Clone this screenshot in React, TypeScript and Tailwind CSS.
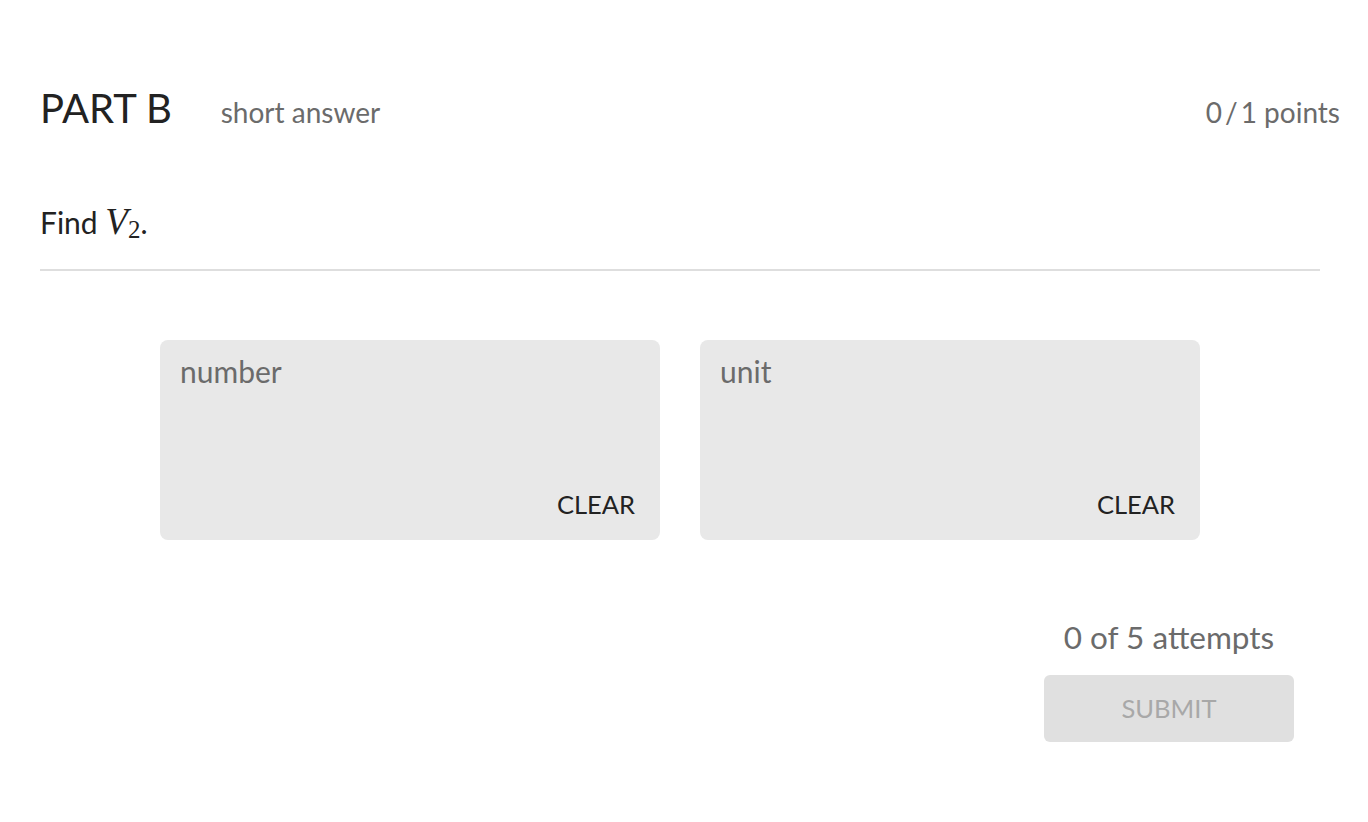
const ClearBox = ({ label }: { label: string }) => (
  <div className="w-[500px] h-[200px] rounded-lg bg-[#e8e8e8] flex flex-col justify-between pl-5 pr-[25px] pt-[11px] pb-[21px]">
    <span className="text-[30px] leading-[40px] text-[#6b6b6b]">{label}</span>
    <button className="self-end text-[25.5px] leading-[30px] text-[#222]">CLEAR</button>
  </div>
);

const App = () => {
  return (
    <div className="min-h-[822px] bg-white font-['Lato','Liberation_Sans',sans-serif]">
      <div className="flex items-baseline pl-10 pr-[28px] pt-[82px]">
        <h2 className="text-[40px] leading-[52px] text-[#222]">PART B</h2>
        <span className="ml-[49px] text-[28px] text-[#6b6b6b]">short answer</span>
        <span className="ml-auto text-[28px] text-[#6b6b6b]">
          0<span className="mx-[3px]">/</span>1 points
        </span>
      </div>

      <div className="ml-10 mr-12 mt-[68px] pb-[19px] border-b-2 border-[#dedede]">
        <p className="text-[30px] leading-[40px] text-[#222]">
          Find{' '}
          <span className="font-['Liberation_Serif',serif] italic text-[37px]">V</span>
          <span className="font-['Liberation_Serif',serif] text-[25px] align-[-4px]">2</span>.
        </p>
      </div>

      <div className="flex justify-center gap-10 mt-[69px] pr-2">
        <ClearBox label="number" />
        <ClearBox label="unit" />
      </div>

      <div className="flex justify-end pr-[74px] mt-[77px]">
        <div className="flex flex-col items-center">
          <p className="text-[31.5px] leading-[40px] text-[#6b6b6b]">0 of 5 attempts</p>
          <button
            disabled
            className="mt-[18px] w-[250px] h-[67px] rounded-md bg-[#e0e0e0] text-[25.5px] text-[#a8a8a8]"
          >
            SUBMIT
          </button>
        </div>
      </div>
    </div>
  );
};

export default App;
